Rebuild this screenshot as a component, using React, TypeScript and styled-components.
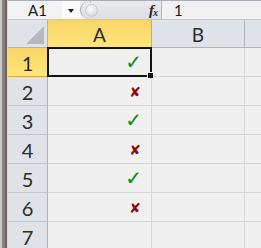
import styled, { createGlobalStyle } from "styled-components";

const GlobalStyle = createGlobalStyle`
  html, body {
    margin: 0;
    padding: 0;
    background: #f0f0f0;
    overflow: hidden;
  }
`;

type Mark = "yes" | "no";

const rows: Mark[] = ["yes", "no", "yes", "no", "yes", "no"];

const App = () => {
  return (
    <>
      <GlobalStyle />
      <Window>
        <Frame />
        <Main>
          <TopStrip>
            <TopDivider />
          </TopStrip>
          <FormulaBar>
            <NameBox>A1</NameBox>
            <DropButton>
              <Arrow />
            </DropButton>
            <Splitter>
              <Knob />
              <Fx>
                f<sub>x</sub>
              </Fx>
            </Splitter>
            <FormulaInput>1</FormulaInput>
          </FormulaBar>
          <Gap />
          <Sheet>
            <Corner>
              <CornerTriangle />
            </Corner>
            <ColHeader $active>A</ColHeader>
            <ColHeader>B</ColHeader>
            <ColHeader $last />
            {rows.map((mark, i) => (
              <Row key={i}>
                <RowHeader $active={i === 0}>{i + 1}</RowHeader>
                <Cell $selected={i === 0}>
                  <Glyph $mark={mark}>{mark === "yes" ? "✓" : "✘"}</Glyph>
                  {i === 0 && <Handle />}
                </Cell>
                <Cell />
                <Cell $last />
              </Row>
            ))}
            <Row>
              <RowHeader>7</RowHeader>
              <Cell />
              <Cell />
              <Cell $last />
            </Row>
          </Sheet>
        </Main>
      </Window>
    </>
  );
};

const Window = styled.div`
  display: flex;
  width: 261px;
  height: 248px;
  overflow: hidden;
  font-family: Lato, "Liberation Sans", sans-serif;
`;

const Frame = styled.div`
  width: 8px;
  flex-shrink: 0;
  background: linear-gradient(
    to right,
    #c9c9c9 0px,
    #c9c9c9 2px,
    #8d807c 2px,
    #8d807c 5px,
    #6f6561 5px,
    #6f6561 7px,
    #d8d8d8 7px
  );
`;

const Main = styled.div`
  flex: 1;
  display: flex;
  flex-direction: column;
  min-width: 0;
`;

const TopStrip = styled.div`
  height: 3px;
  background: #ebebeb;
  border-bottom: 1px solid #a9adb3;
  position: relative;
`;

const TopDivider = styled.div`
  position: absolute;
  left: 82px;
  top: 0;
  width: 1px;
  height: 3px;
  background: #b9bcc0;
`;

const FormulaBar = styled.div`
  height: 23px;
  display: flex;
  align-items: stretch;
  background: #f2f2f2;
  border-bottom: 1px solid #c4c8ce;
`;

const NameBox = styled.div`
  width: 54px;
  display: flex;
  align-items: center;
  padding-left: 20px;
  box-sizing: border-box;
  font-size: 15px;
  color: #1a1a1a;
  background: #f3f3f3;
`;

const DropButton = styled.div`
  width: 18px;
  display: flex;
  align-items: center;
  justify-content: center;
  background: #fbfbfb;
`;

const Arrow = styled.div`
  width: 0;
  height: 0;
  border-left: 3.5px solid transparent;
  border-right: 3.5px solid transparent;
  border-top: 4px solid #1e1e1e;
  margin-top: 1px;
`;

const Splitter = styled.div`
  width: 82px;
  display: flex;
  align-items: center;
  justify-content: space-between;
  padding: 0 4px 0 4px;
  box-sizing: border-box;
  background: linear-gradient(#e9ebee, #dcdfe3);
  border-radius: 12px 0 0 12px;
  border-left: 1px solid #a8adb4;
  border-right: 1px solid #b7bbc1;
`;

const Knob = styled.div`
  width: 11px;
  height: 11px;
  border-radius: 50%;
  background: radial-gradient(circle at 40% 35%, #fbfbfb, #cdd0d5);
  border: 1px solid #c6cad0;
`;

const Fx = styled.div`
  font-family: "Liberation Serif", serif;
  font-style: italic;
  font-weight: bold;
  font-size: 15px;
  color: #2a2a2a;
  letter-spacing: -1px;
  sub {
    font-size: 10px;
    vertical-align: -1px;
  }
`;

const FormulaInput = styled.div`
  flex: 1;
  display: flex;
  align-items: center;
  padding-left: 12px;
  font-size: 15px;
  color: #1a1a1a;
  background: #f1f1f1;
`;

const Gap = styled.div`
  height: 3px;
  background: #e4e7eb;
`;

const Sheet = styled.div`
  display: grid;
  grid-template-columns: 40px 104px 93px 1fr;
  grid-auto-rows: 29px;
  grid-template-rows: 28px;
`;

const Row = styled.div`
  display: contents;
`;

const Corner = styled.div`
  background: #dfe3e8;
  border-right: 1px solid #aeb3b9;
  border-bottom: 1px solid #aeb3b9;
  position: relative;
`;

const CornerTriangle = styled.div`
  position: absolute;
  right: 3px;
  bottom: 3px;
  width: 0;
  height: 0;
  border-left: 18px solid transparent;
  border-bottom: 18px solid #b4b9bf;
`;

const ColHeader = styled.div<{ $active?: boolean; $last?: boolean }>`
  display: flex;
  align-items: center;
  justify-content: center;
  padding-top: 2px;
  box-sizing: border-box;
  font-size: 19px;
  color: #2b2b2b;
  background: ${(p) =>
    p.$active ? "linear-gradient(#f9d467, #ffe67a)" : "#dfe3e8"};
  border-right: 1px solid ${(p) => (p.$active ? "#e2a933" : "#b0b5bc")};
  border-bottom: 1px solid ${(p) => (p.$active ? "#e2a933" : "#aeb3b9")};
  ${(p) => p.$last && "border-right: none;"}
`;

const RowHeader = styled.div<{ $active?: boolean }>`
  display: flex;
  align-items: center;
  justify-content: center;
  padding-top: 2px;
  box-sizing: border-box;
  font-size: 20px;
  color: #2b2b2b;
  background: ${(p) =>
    p.$active ? "linear-gradient(#f9d467, #ffe67a)" : "#dfe3e8"};
  border-right: 1px solid ${(p) => (p.$active ? "#e2a933" : "#aeb3b9")};
  border-bottom: 1px solid ${(p) => (p.$active ? "#e2a933" : "#c3c7cc")};
`;

const Cell = styled.div<{ $selected?: boolean; $last?: boolean }>`
  position: relative;
  display: flex;
  align-items: center;
  justify-content: flex-end;
  padding-right: 9px;
  background: #f0f0f0;
  border-right: ${(p) => (p.$last ? "none" : "1px solid #d6d6d6")};
  border-bottom: 1px solid #d6d6d6;
  ${(p) =>
    p.$selected &&
    `
    outline: 2px solid #111;
    outline-offset: -2px;
    border-color: #111;
    margin: -1px 0 0 -1px;
    z-index: 1;
  `}
`;

const Handle = styled.div`
  position: absolute;
  right: -3px;
  bottom: -3px;
  width: 5px;
  height: 5px;
  background: #111;
  border: 1px solid #f0f0f0;
`;

const Glyph = styled.span<{ $mark: Mark }>`
  font-family: "DejaVu Sans", sans-serif;
  line-height: 1;
  color: ${(p) => (p.$mark === "yes" ? "#0f8a12" : "#8a0c12")};
  font-size: ${(p) => (p.$mark === "yes" ? "20px" : "14px")};
  ${(p) => p.$mark === "no" && "margin-right: 1px; margin-top: 2px;"}
`;

export default App;
